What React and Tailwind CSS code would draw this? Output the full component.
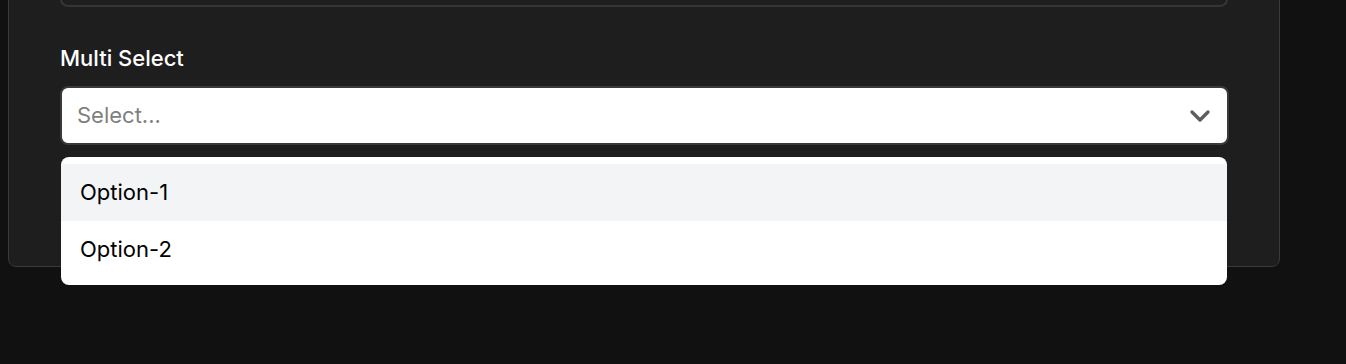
import React from "react";
import { ChevronDown } from "lucide-react";

export default function App() {
  return (
    <div className="h-screen w-full overflow-hidden bg-[#111111] pl-2" style={{ fontFamily: "Inter, 'Noto Sans', sans-serif" }}>
      <div className="mt-[-74px] w-[1272px] rounded-lg border border-[#3a3a3a] bg-[#1e1e1e] pl-[51px] pr-[50px] pt-6 pb-[121px]">
        {/* previous field, mostly scrolled out of view */}
        <div className="mr-px h-[56px] rounded-lg border-2 border-[#353535] bg-[#1e1e1e]" />

        <div className="mt-[39px] text-[22px] font-medium leading-6 text-white">Multi Select</div>

        <div className="relative mt-[16px]">
          <div className="flex h-[59px] items-center justify-between rounded-lg border-2 border-[#3a3a3a] bg-white pl-[15px] pr-[11px]">
            <span className="text-[22px] text-[#808080]">Select...</span>
            <ChevronDown className="h-8 w-8 text-[#5c5c5c]" strokeWidth={2.5} />
          </div>

          <div className="absolute left-px right-[2px] top-[71px] z-10 rounded-lg bg-white py-[7px]">
            <div className="flex h-[57px] items-center bg-[#f3f4f6] px-[19px] text-[22px] text-black">Option-1</div>
            <div className="flex h-[57px] items-center px-[19px] text-[22px] text-black">Option-2</div>
          </div>
        </div>
      </div>
    </div>
  );
}
